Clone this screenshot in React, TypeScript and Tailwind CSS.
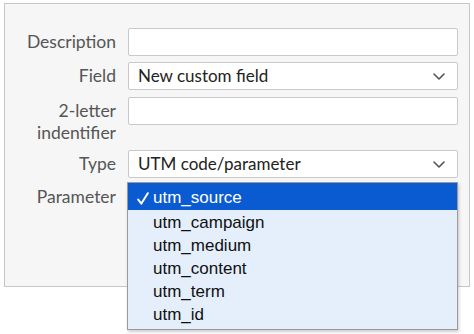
import React from 'react';

const label = 'text-right text-[17.5px] leading-[22px] text-[#555555]';
const box = 'h-[28px] w-[330px] rounded-[2px] border border-[#c9c9c9] bg-white';

function Chevron() {
  return (
    <svg width="12" height="7" viewBox="0 0 12 7" className="shrink-0">
      <path d="M1 1l5 5 5-5" fill="none" stroke="#555" strokeWidth="1.6" strokeLinecap="round" strokeLinejoin="round" />
    </svg>
  );
}

function Check() {
  return (
    <svg width="12" height="13" viewBox="0 0 12 13" className="mr-[4px] shrink-0">
      <path d="M1.2 7.6L4.4 11.6L10.8 1.2" fill="none" stroke="#fff" strokeWidth="2" strokeLinecap="round" strokeLinejoin="round" />
    </svg>
  );
}

function Select({ value }: { value: string }) {
  return (
    <div className={`${box} flex items-center justify-between pl-[9px] pr-[12px]`}>
      <span className="text-[17px] text-[#222]">{value}</span>
      <Chevron />
    </div>
  );
}

export default function App() {
  const options = ['utm_campaign', 'utm_medium', 'utm_content', 'utm_term', 'utm_id'];
  return (
    <div className="h-[334px] w-[474px] bg-white pl-[4px] pt-[3px] font-['Lato',sans-serif]">
      <div className="h-[284px] w-[466px] border border-[#c6c6c6] bg-[#f6f6f6] pt-[24px]">
        <div className="grid grid-cols-[111px_330px] items-start gap-x-[12px]">
          <div className={`${label} pt-[3px]`}>Description</div>
          <div className={box} />
        </div>
        <div className="mt-[6px] grid grid-cols-[111px_330px] items-center gap-x-[12px]">
          <div className={label}>Field</div>
          <Select value="New custom field" />
        </div>
        <div className="mt-[7px] grid grid-cols-[111px_330px] items-start gap-x-[12px]">
          <div className={`${label} pt-[3px]`}>
            2-letter
            <br />
            indentifier
          </div>
          <div className={box} />
        </div>
        <div className="mt-[6px] grid grid-cols-[111px_330px] items-center gap-x-[12px]">
          <div className={label}>Type</div>
          <Select value="UTM code/parameter" />
        </div>
        <div className="mt-[4px] grid grid-cols-[111px_330px] items-start gap-x-[11px]">
          <div className={`${label} pt-[4px]`}>Parameter</div>
          <div className="relative h-[28px]">
            <div className="absolute left-0 top-0 z-10 w-[331px] border border-[#9a9a9a] bg-[#e4effb] pb-[4px] font-['Liberation_Sans',Arial,sans-serif] text-[17px] text-[#111] shadow-[1px_2px_3px_rgba(0,0,0,0.2)]">
              <div className="flex h-[27px] items-center bg-[#0a5ad2] pt-[3px] pl-[9px] text-white">
                <Check />
                <span>utm_source</span>
              </div>
              {options.map((o) => (
                <div key={o} className="flex h-[23px] items-center pl-[25px] pt-[2px]">
                  {o}
                </div>
              ))}
            </div>
          </div>
        </div>
      </div>
    </div>
  );
}
